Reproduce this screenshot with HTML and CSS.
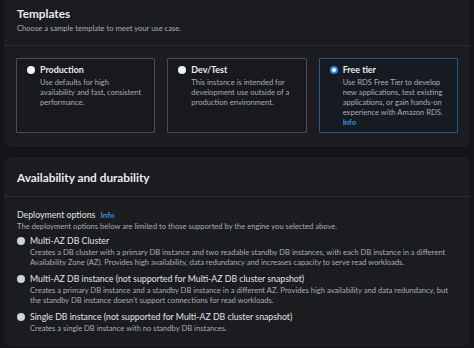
FILE: index.html
```html
<!DOCTYPE html>
<html>
<head>
<meta charset="utf-8">
<link rel="stylesheet" href="styles.css">
</head>
<body>
<section class="panel">
  <header class="panel-head">
    <h2 class="panel-title">Templates</h2>
    <p class="panel-sub">Choose a sample template to meet your use case.</p>
  </header>
  <div class="cards">
    <div class="card">
      <span class="radio"></span>
      <div class="card-body">
        <div class="card-title">Production</div>
        <div class="card-desc">Use defaults for high<br>availability and fast, consistent performance.</div>
      </div>
    </div>
    <div class="card">
      <span class="radio"></span>
      <div class="card-body">
        <div class="card-title">Dev/Test</div>
        <div class="card-desc">This instance is intended for development use outside of a production environment.</div>
      </div>
    </div>
    <div class="card card-selected">
      <span class="radio radio-on"></span>
      <div class="card-body">
        <div class="card-title">Free tier</div>
        <div class="card-desc">Use RDS Free Tier to develop new applications, test existing applications, or gain hands-on experience with Amazon RDS. <a class="info">Info</a></div>
      </div>
    </div>
  </div>
</section>

<section class="panel panel2">
  <header class="panel-head head2">
    <h2 class="panel-title">Availability and durability</h2>
  </header>
  <div class="panel-content">
    <div class="field-label">Deployment options <a class="info">Info</a></div>
    <div class="field-desc">The deployment options below are limited to those supported by the engine you selected above.</div>
    <div class="options">
      <div class="option">
        <span class="radio radio-dis"></span>
        <div class="opt-body">
          <div class="opt-title">Multi-AZ DB Cluster</div>
          <div class="opt-desc">Creates a DB cluster with a primary DB instance and two readable standby DB instances, with each DB instance in a different Availability Zone (AZ). Provides high availability, data redundancy and increases capacity to serve read workloads.</div>
        </div>
      </div>
      <div class="option">
        <span class="radio radio-dis"></span>
        <div class="opt-body">
          <div class="opt-title">Multi-AZ DB instance (not supported for Multi-AZ DB cluster snapshot)</div>
          <div class="opt-desc">Creates a primary DB instance and a standby DB instance in a different AZ. Provides high availability and data redundancy, but the standby DB instance doesn’t support connections for read workloads.</div>
        </div>
      </div>
      <div class="option">
        <span class="radio radio-dis"></span>
        <div class="opt-body">
          <div class="opt-title">Single DB instance (not supported for Multi-AZ DB cluster snapshot)</div>
          <div class="opt-desc">Creates a single DB instance with no standby DB instances.</div>
        </div>
      </div>
    </div>
  </div>
</section>
</body>
</html>
```

FILE: styles.css
```css
html, body {
  margin: 0;
  padding: 0;
}
body {
  background: #141518;
  font-family: Lato, "Open Sans", sans-serif;
  color: #d1d5db;
  padding: 0 4px;
  height: 348px;
  overflow: hidden;
}
.panel {
  background: #1b1c1f;
  border-radius: 0 0 6px 6px;
  padding-bottom: 14px;
}
.panel2 {
  margin-top: 10px;
  border-radius: 6px;
  padding-bottom: 13px;
}
.panel-head {
  padding: 6px 13px 12px;
  border-bottom: 1px solid #2c2e33;
}
.head2 {
  padding: 13px 13px 10px;
}
.panel-title {
  margin: 0;
  font-size: 11.8px;
  line-height: 16px;
  font-weight: 700;
  color: #e9ebed;
}
.panel-sub {
  margin: 1px 0 0;
  font-size: 7.6px;
  line-height: 10px;
  color: #a8acb2;
}
.cards {
  display: grid;
  grid-template-columns: 1fr 1fr 1fr;
  gap: 12px;
  padding: 12px 12px 0;
}
.card {
  height: 75px;
  box-sizing: border-box;
  border: 1px solid #4a4c50;
  border-radius: 1px;
  display: flex;
  gap: 5px;
  padding: 5px 8px 0 10px;
  background: #18191c;
}
.card-selected {
  border-color: #1f5b8c;
  background: #161b22;
}
.radio {
  flex: none;
  width: 8px;
  height: 8px;
  border-radius: 50%;
  background: #f2f3f3;
  margin-top: 2px;
  box-sizing: border-box;
}
.radio-on {
  background: #fff;
  border: 2.5px solid #2c88d9;
}
.radio-dis {
  background: #cfd2d6;
}
.card-title {
  font-size: 8.9px;
  line-height: 12px;
  font-weight: 700;
  color: #e9ebed;
  margin-bottom: 1px;
}
.card-desc {
  font-size: 7.6px;
  line-height: 10px;
  color: #a8acb2;
}
.info {
  color: #3a8fd8;
  font-weight: 700;
  display: inline-block;
}
.card-desc .info {
  display: block;
}
.panel-content {
  padding: 12px 13px 0;
}
.field-label {
  font-size: 8.75px;
  line-height: 12px;
  color: #e1e3e6;
}
.field-label .info {
  font-size: 7.8px;
  margin-left: 3px;
}
.field-desc {
  font-size: 7.6px;
  line-height: 10px;
  color: #a8acb2;
}
.options {
  display: flex;
  flex-direction: column;
  gap: 6px;
  margin-top: 4px;
}
.option {
  display: flex;
  gap: 5px;
}
.opt-title {
  font-size: 8.75px;
  line-height: 12px;
  color: #e1e3e6;
}
.opt-desc {
  font-size: 7.6px;
  line-height: 10px;
  color: #a8acb2;
}
```
